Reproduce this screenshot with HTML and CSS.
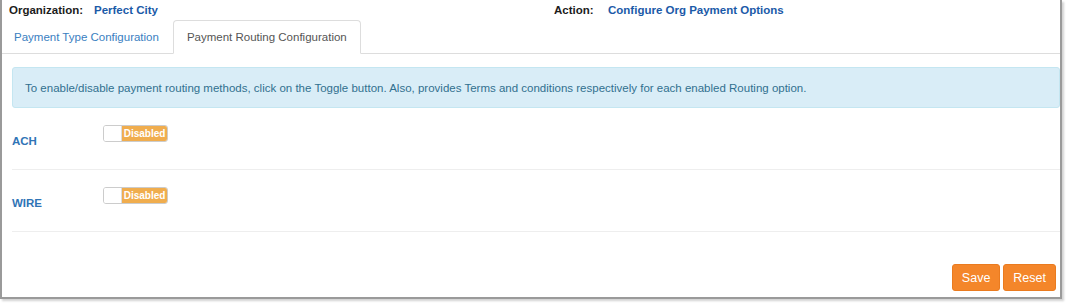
FILE: index.html
```html
<!DOCTYPE html>
<html>
<head>
	<meta charset="UTF-8">
	<title>Configure Org Payment Options</title>
	<link rel="stylesheet" href="styles.css">
</head>
<body>

	<div class="frame">
		<!-- context header -->
		<div class="context">
			<div class="context-item">
				<span class="context-label">Organization:</span>
				<span class="context-value">Perfect City</span>
			</div>
			<div class="context-item context-action">
				<span class="context-label">Action:</span>
				<span class="context-value">Configure Org Payment Options</span>
			</div>
		</div>

		<!-- tabs -->
		<ul class="tabs">
			<li class="tab"><a href="#">Payment Type Configuration</a></li>
			<li class="tab active"><a href="#">Payment Routing Configuration</a></li>
		</ul>

		<div class="pane">
			<div class="alert">To enable/disable payment routing methods, click on the Toggle button. Also, provides Terms and conditions respectively for each enabled Routing option.</div>

			<div class="route">
				<label class="route-name">ACH</label>
				<div class="toggle"><span class="toggle-handle"></span><span class="toggle-off">Disabled</span></div>
			</div>
			<div class="route">
				<label class="route-name">WIRE</label>
				<div class="toggle"><span class="toggle-handle"></span><span class="toggle-off">Disabled</span></div>
			</div>

			<div class="actions">
				<button class="btn">Save</button>
				<button class="btn">Reset</button>
			</div>
		</div>
	</div>

</body>
</html>
```

FILE: styles.css
```css
* { margin: 0; padding: 0; box-sizing: border-box; }

html, body {
	width: 100%;
	height: 100%;
	background: #fff;
	font-family: "Liberation Sans", Arial, sans-serif;
	font-size: 11.5px;
}

.frame {
	width: 1062px;
	height: 299px;
	border-left: 2px solid #9a9a9a;
	border-right: 2px solid #9a9a9a;
	border-bottom: 2px solid #9a9a9a;
	box-shadow: 2px 2px 2px rgba(0, 0, 0, .18);
	background: #fff;
}

.context {
	display: flex;
	height: 20px;
	align-items: center;
	padding-left: 7px;
	font-size: 11.5px;
	font-weight: bold;
}
.context-item {
	display: flex;
	width: 545px;
}
.context-action {
	width: auto;
}
.context-label {
	color: #1c1c1c;
	width: 85px;
}
.context-action .context-label {
	width: 54px;
}
.context-value {
	color: #1b5aa8;
}

.tabs {
	display: flex;
	list-style: none;
	height: 34px;
	border-bottom: 1px solid #ddd;
}
.tab {
	margin-right: 2px;
}
.tab a {
	display: flex;
	align-items: center;
	height: 34px;
	padding: 0 11px;
	color: #3a80c1;
	text-decoration: none;
	border: 1px solid transparent;
	border-radius: 4px 4px 0 0;
}
.tab.active a {
	color: #555;
	background: #fff;
	border-color: #ddd;
	border-bottom-color: #fff;
	padding: 0 13px;
}

.pane {
	padding-left: 10px;
}

.alert {
	margin-top: 13px;
	height: 41px;
	display: flex;
	align-items: center;
	padding: 0 12px;
	background: #d9edf7;
	border: 1px solid #c4e6f1;
	border-radius: 3px;
	color: #31708f;
}

.route {
	display: flex;
	align-items: flex-start;
	height: 62px;
	border-bottom: 1px solid #eee;
}
.route-name {
	width: 91px;
	padding-top: 27px;
	color: #2f74b6;
	font-weight: bold;
	font-size: 11.5px;
}
.toggle {
	display: flex;
	margin-top: 17px;
	width: 65px;
	height: 17px;
	border: 1px solid #ccc;
	border-radius: 3px;
	overflow: hidden;
}
.toggle-handle {
	width: 18px;
	background: #fff;
	border-right: 1px solid #ddd;
}
.toggle-off {
	flex: 1;
	display: flex;
	align-items: center;
	justify-content: center;
	background: #f0ad4e;
	color: #fff;
	font-size: 10px;
	font-weight: bold;
}

.actions {
	display: flex;
	justify-content: flex-end;
	gap: 3px;
	margin-top: 32px;
	padding-right: 4px;
}
.btn {
	height: 27px;
	padding: 0 9px;
	background: #f4862a;
	border: 1px solid #ea7b1f;
	border-radius: 3px;
	color: #fff;
	font-family: "Liberation Sans", Arial, sans-serif;
	font-size: 12.5px;
}
```
